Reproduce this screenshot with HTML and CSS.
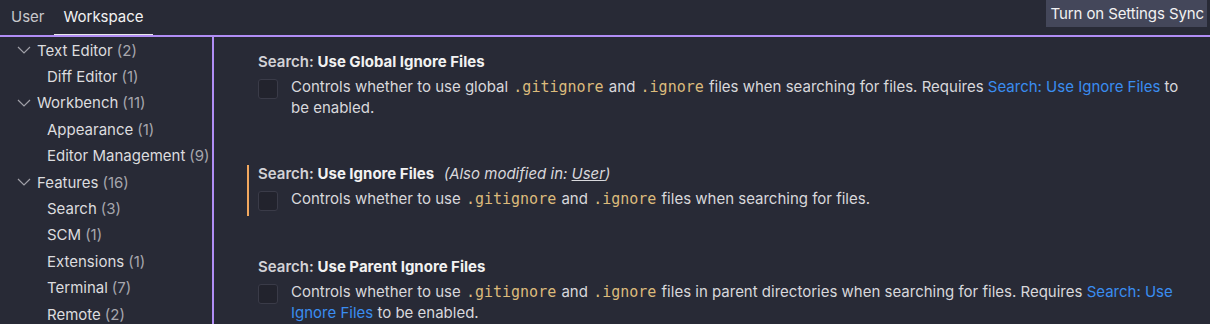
FILE: index.html
```html
<!DOCTYPE html>
<html lang="en">
<head>
    <meta charset="UTF-8">
    <title>Settings - Workspace</title>
    <link rel="stylesheet" href="styles.css">
</head>
<body>
<div id="header">
    <ul id="tabs">
        <li>User</li>
        <li class="selected">Workspace</li>
    </ul>
    <a href="javascript:;" id="sync">Turn on Settings Sync</a>
</div>
<div id="main">
    <ul id="toc">
        <li class="group"><svg class="chev" width="14" height="8" viewBox="0 0 14 8"><path d="M1 1l6 6 6-6"/></svg>Text Editor <span class="count">(2)</span></li>
        <li class="sub">Diff Editor <span class="count">(1)</span></li>
        <li class="group"><svg class="chev" width="14" height="8" viewBox="0 0 14 8"><path d="M1 1l6 6 6-6"/></svg>Workbench <span class="count">(11)</span></li>
        <li class="sub">Appearance <span class="count">(1)</span></li>
        <li class="sub">Editor Management <span class="count">(9)</span></li>
        <li class="group"><svg class="chev" width="14" height="8" viewBox="0 0 14 8"><path d="M1 1l6 6 6-6"/></svg>Features <span class="count">(16)</span></li>
        <li class="sub">Search <span class="count">(3)</span></li>
        <li class="sub">SCM <span class="count">(1)</span></li>
        <li class="sub">Extensions <span class="count">(1)</span></li>
        <li class="sub">Terminal <span class="count">(7)</span></li>
        <li class="sub">Remote <span class="count">(2)</span></li>
    </ul>
    <div id="settings">
        <div class="setting">
            <div class="title"><span class="cat">Search: </span>Use Global Ignore Files</div>
            <div class="row">
                <span class="check"></span>
                <p class="desc">Controls whether to use global <code>.gitignore</code> and <code>.ignore</code> files when searching for files. Requires <a href="javascript:;">Search: Use Ignore Files</a> to be enabled.</p>
            </div>
        </div>
        <div class="setting modified">
            <div class="title"><span class="cat">Search: </span>Use Ignore Files <span class="also">(Also modified in: <u>User</u>)</span></div>
            <div class="row">
                <span class="check"></span>
                <p class="desc">Controls whether to use <code>.gitignore</code> and <code>.ignore</code> files when searching for files.</p>
            </div>
        </div>
        <div class="setting">
            <div class="title"><span class="cat">Search: </span>Use Parent Ignore Files</div>
            <div class="row">
                <span class="check"></span>
                <p class="desc">Controls whether to use <code>.gitignore</code> and <code>.ignore</code> files in parent directories when searching for files. Requires <a href="javascript:;">Search: Use Ignore Files</a> to be enabled.</p>
            </div>
        </div>
    </div>
</div>
</body>
</html>
```
FILE: styles.css
```css
* {
    margin: 0;
    padding: 0;
}

ul, ol {
    list-style: none;
}

a {
    text-decoration: none;
}

body {
    background-color: #282a36;
    color: #d8d8dc;
    font-family: Inter, "Noto Sans", sans-serif;
    font-size: 15px;
    height: 324px;
    overflow: hidden;
}

#header {
    display: flex;
    justify-content: space-between;
    height: 35px;
    border-bottom: 2px solid #b18df5;
}

#tabs {
    display: flex;
    padding-left: 2px;
}

#tabs li {
    padding: 0 9px;
    line-height: 33px;
    color: #c8c8cc;
    cursor: pointer;
}

#tabs li.selected {
    color: #f2f2f2;
    border-bottom: 1px solid #e8e8e8;
    margin-left: 1px;
}

#sync {
    align-self: flex-start;
    height: 27px;
    line-height: 27px;
    margin-right: 3px;
    padding: 0 3px 0 4px;
    background-color: #44475a;
    color: #f2f2f2;
    letter-spacing: -0.1px;
}

#main {
    display: flex;
}

#toc {
    width: 212px;
    flex-shrink: 0;
    border-right: 2px solid #b18df5;
    height: 300px;
}

#toc li {
    display: flex;
    align-items: center;
    height: 26.4px;
    white-space: nowrap;
    color: #dcdcdf;
}

#toc li.group {
    padding-left: 17px;
}

#toc li.sub {
    padding-left: 47px;
}

#toc .count {
    color: #a6a6ad;
    margin-left: 4px;
}

.chev {
    margin-right: 6px;
    fill: none;
    stroke: #a0a0a8;
    stroke-width: 1.2;
}

#settings {
    flex: 1;
    padding: 16px 20px 0 33px;
}

.setting {
    padding: 0 0 5px 9px;
    border-left: 2px solid transparent;
    margin-bottom: 42px;
}

.setting.modified {
    border-left-color: #f2a85f;
}

.title {
    line-height: 18px;
    font-weight: 700;
    color: #f2f2f2;
}

.title .cat {
    font-weight: 600;
    color: #d2d2d6;
}

.title .also {
    font-weight: 400;
    font-style: italic;
    color: #d8d8dc;
    margin-left: 6px;
}

.row {
    display: flex;
    margin-top: 5px;
}

.check {
    flex-shrink: 0;
    width: 20px;
    height: 20px;
    margin: 3px 13px 0 0;
    box-sizing: border-box;
    background-color: #22232d;
    border: 1px solid #3a3b48;
    border-radius: 3px;
}

.desc {
    line-height: 21px;
}

.desc code {
    font-family: "DejaVu Sans Mono", monospace;
    font-size: 15px;
    line-height: 1;
    color: #dcbb7c;
    margin: 0 1px;
}

.desc a {
    color: #3a8df0;
}
```
